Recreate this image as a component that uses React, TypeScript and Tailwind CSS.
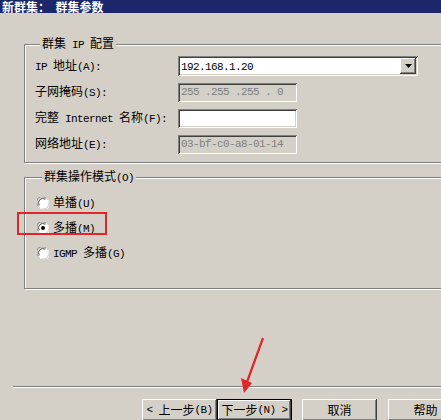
import React from "react";

const sunken =
  "shadow-[inset_1px_1px_0_#808080,inset_-1px_-1px_0_#ffffff,inset_2px_2px_0_#404040,inset_-2px_-2px_0_#d4d0c8]";
const raised =
  "shadow-[inset_-1px_-1px_0_#404040,inset_1px_1px_0_#ffffff,inset_-2px_-2px_0_#808080]";
const etched = "border border-[#808080] shadow-[inset_1px_1px_0_#ffffff,1px_1px_0_#ffffff]";

// half-width runs get a fixed-pitch face so they sit at 6px a character
function T({ text }: { text: string }) {
  const runs = text.match(/[\x00-\x7f]+|[^\x00-\x7f]+/g) ?? [];
  return (
    <>
      {runs.map((r, i) =>
        /^[\x00-\x7f]/.test(r) ? (
          <span key={i} className="font-['Liberation_Mono',monospace] text-[11px] tracking-[-0.6px] whitespace-pre">
            {r}
          </span>
        ) : (
          <span key={i}>{r}</span>
        )
      )}
    </>
  );
}

function Field({ label, children }: { label: string; children: React.ReactNode }) {
  return (
    <div className="flex items-center h-[20px]">
      <span className="w-[143px] whitespace-pre">
        <T text={label} />
      </span>
      {children}
    </div>
  );
}

function Edit({ value = "", disabled = false }: { value?: string; disabled?: boolean }) {
  return (
    <div
      className={`h-[19px] w-[119px] px-[3px] flex items-center whitespace-pre ${sunken} ${
        disabled ? "bg-[#d4d0c8] text-[#808080]" : "bg-white"
      }`}
    >
      <T text={value} />
    </div>
  );
}

function Radio({ label, checked = false }: { label: string; checked?: boolean }) {
  return (
    <div className="flex items-center h-[16px] gap-[4px]">
      <svg width="12" height="12" viewBox="0 0 12 12">
        <circle cx="6" cy="6" r="5.5" fill="#ffffff" />
        <path d="M1.2 9 A5.3 5.3 0 0 1 9 1.2" fill="none" stroke="#808080" strokeWidth="1" />
        <path d="M2.3 8.3 A4.3 4.3 0 0 1 8.3 2.3" fill="none" stroke="#404040" strokeWidth="1" />
        <path d="M3 11 A5.3 5.3 0 0 0 11 3" fill="none" stroke="#ffffff" strokeWidth="1" />
        {checked && <circle cx="6" cy="6" r="2" fill="#000000" />}
      </svg>
      <span className="whitespace-pre">
        <T text={label} />
      </span>
    </div>
  );
}

function Button({ label, isDefault = false }: { label: string; isDefault?: boolean }) {
  return (
    <div
      className={`shrink-0 h-[22px] w-[75px] flex items-center justify-center bg-[#d4d0c8] whitespace-pre ${
        isDefault ? "border border-black" : ""
      } ${raised}`}
    >
      <T text={label} />
    </div>
  );
}

export default function App() {
  return (
    <div className="relative w-[441px] h-[420px] overflow-hidden bg-[#d4d0c8] text-[12px] leading-[14px] text-black font-[SimSun,'Noto_Sans_CJK_SC',sans-serif]">
      {/* title strip */}
      <div className="h-[13px] bg-[#1b276a] pl-[2px] flex items-center">
        <span className="leading-[13px] text-white font-bold whitespace-pre">新群集：  群集参数</span>
      </div>

      {/* cluster IP group */}
      <fieldset className={`ml-[24px] mt-[23px] w-[440px] h-[127px] pl-[10px] ${etched}`}>
        <legend className="ml-[5px] px-[2px] bg-[#d4d0c8] leading-[14px]">
          <T text="群集 IP 配置" />
        </legend>
        <div className="mt-[4px] flex flex-col gap-[6px]">
          <Field label="IP 地址(A):">
            <div className={`h-[20px] w-[240px] bg-white flex items-center pl-[3px] pr-[2px] ${sunken}`}>
              <span className="flex-1">
                <T text="192.168.1.20" />
              </span>
              <div className={`w-[16px] h-[16px] bg-[#d4d0c8] flex items-center justify-center ${raised}`}>
                <svg width="7" height="4" viewBox="0 0 7 4">
                  <path d="M0 0 H7 L3.5 4 Z" fill="#000000" />
                </svg>
              </div>
            </div>
          </Field>
          <Field label="子网掩码(S):">
            <Edit value="255 .255 .255 . 0" disabled />
          </Field>
          <Field label="完整 Internet 名称(F):">
            <Edit />
          </Field>
          <Field label="网络地址(E):">
            <Edit value="03-bf-c0-a8-01-14" disabled />
          </Field>
        </div>
      </fieldset>

      {/* operation mode group */}
      <fieldset className={`ml-[24px] mt-[6px] w-[440px] h-[120px] pl-[12px] ${etched}`}>
        <legend className="ml-[5px] px-[2px] bg-[#d4d0c8] leading-[14px]">
          <T text="群集操作模式(O)" />
        </legend>
        <div className="mt-[10px] flex flex-col gap-[9px]">
          <Radio label="单播(U)" />
          <Radio label="多播(M)" checked />
          <Radio label="IGMP 多播(G)" />
        </div>
      </fieldset>

      <div className="mt-[97px] ml-[13px] h-[2px] border-t border-b border-t-[#808080] border-b-white" />

      <div className="mt-[11px] pl-[142px] flex">
        <Button label="< 上一步(B)" />
        <Button label="下一步(N) >" isDefault />
        <div className="ml-[10px] shrink-0">
          <Button label="取消" />
        </div>
        <div className="ml-[11px] shrink-0">
          <Button label="帮助" />
        </div>
      </div>

      {/* red highlight and pointer */}
      <div className="absolute left-[17px] top-[212px] w-[90px] h-[23px] border-2 border-[#e0262a]" />
      <svg className="absolute left-[230px] top-[330px]" width="45" height="70" viewBox="0 0 45 70">
        <path d="M33 8 L17 52" stroke="#e0262a" strokeWidth="2.2" fill="none" />
        <path d="M11 48 L22 53 L14 63 Z" fill="#e0262a" />
      </svg>
    </div>
  );
}
